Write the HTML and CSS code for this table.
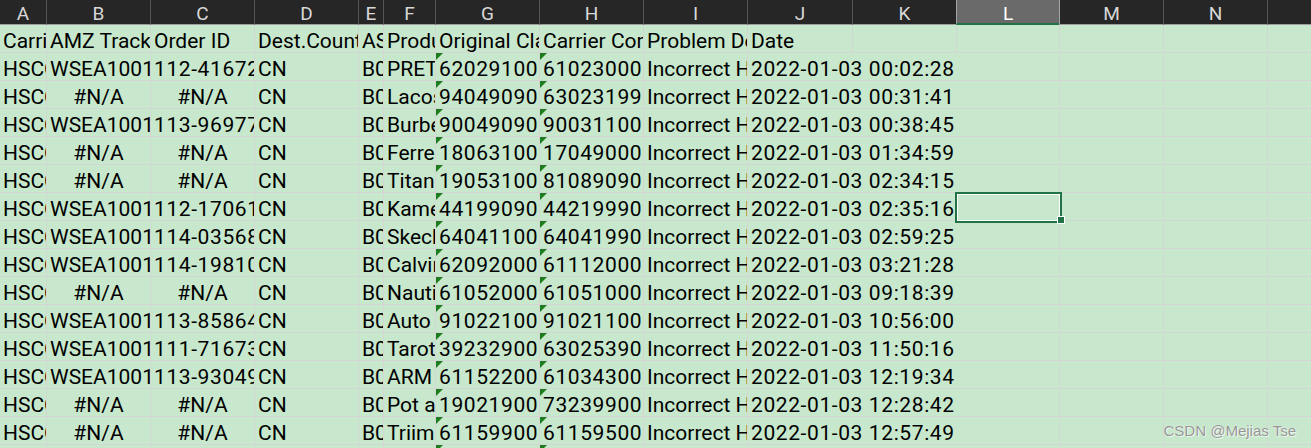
FILE: index.html
```html
<!DOCTYPE html>
<html lang="en">
<head>
<meta charset="utf-8">
<title>Sheet</title>
<link rel="stylesheet" href="styles.css">
</head>
<body>
<div class="sheet">
  <div class="h first">A</div><div class="h">B</div><div class="h">C</div><div class="h">D</div><div class="h">E</div><div class="h">F</div><div class="h">G</div><div class="h">H</div><div class="h">I</div><div class="h">J</div><div class="h">K</div><div class="h sel">L</div><div class="h after-sel">M</div><div class="h">N</div><div class="h"></div>

  <div class="c first">Carrier</div><div class="c">AMZ Tracking ID</div><div class="c">Order ID</div><div class="c">Dest.Country</div><div class="c">ASIN</div><div class="c">Product Name</div><div class="c">Original Class Code</div><div class="c">Carrier Corrected Code</div><div class="c">Problem Description</div><div class="c">Date</div><div class="c"></div><div class="c"></div><div class="c"></div><div class="c"></div><div class="c"></div>

  <div class="c first">HSCODE</div><div class="c">WSEA10012384756</div><div class="c n">112-4167234-1234567</div><div class="c">CN</div><div class="c">B07XYZ1234</div><div class="c">PRETTYGARDEN Dress</div><div class="c n tri">6202910000</div><div class="c n tri">6102300000</div><div class="c">Incorrect HS Code</div><div class="c n sp3">2022-01-03 00:02:28</div><div class="c"></div><div class="c"></div><div class="c"></div>

  <div class="c first">HSCODE</div><div class="c ctr">#N/A</div><div class="c ctr">#N/A</div><div class="c">CN</div><div class="c">B08XYZ1234</div><div class="c">Lacoste Towel</div><div class="c n tri">9404909000</div><div class="c n tri">6302319900</div><div class="c">Incorrect HS Code</div><div class="c n sp3">2022-01-03 00:31:41</div><div class="c"></div><div class="c"></div><div class="c"></div>

  <div class="c first">HSCODE</div><div class="c">WSEA10012384757</div><div class="c n">113-9697734-2345678</div><div class="c">CN</div><div class="c">B09XYZ1234</div><div class="c">Burberry Watch</div><div class="c n tri">9004909000</div><div class="c n tri">9003110000</div><div class="c">Incorrect HS Code</div><div class="c n sp3">2022-01-03 00:38:45</div><div class="c"></div><div class="c"></div><div class="c"></div>

  <div class="c first">HSCODE</div><div class="c ctr">#N/A</div><div class="c ctr">#N/A</div><div class="c">CN</div><div class="c">B01XYZ1234</div><div class="c">Ferrero Rocher</div><div class="c n tri">1806310000</div><div class="c n tri">1704900000</div><div class="c">Incorrect HS Code</div><div class="c n sp3">2022-01-03 01:34:59</div><div class="c"></div><div class="c"></div><div class="c"></div>

  <div class="c first">HSCODE</div><div class="c ctr">#N/A</div><div class="c ctr">#N/A</div><div class="c">CN</div><div class="c">B02XYZ1234</div><div class="c">Titan Cup</div><div class="c n tri">1905310000</div><div class="c n tri">8108909000</div><div class="c">Incorrect HS Code</div><div class="c n sp3">2022-01-03 02:34:15</div><div class="c"></div><div class="c"></div><div class="c"></div>

  <div class="c first">HSCODE</div><div class="c">WSEA10012384758</div><div class="c n">112-1706134-3456789</div><div class="c">CN</div><div class="c">B03XYZ1234</div><div class="c">Kamenstein Rack</div><div class="c n tri">4419909090</div><div class="c n tri">4421999090</div><div class="c">Incorrect HS Code</div><div class="c n sp2">2022-01-03 02:35:16</div><div class="c selc"><div class="selbox"></div><div class="handle"></div></div><div class="c"></div><div class="c"></div><div class="c"></div>

  <div class="c first">HSCODE</div><div class="c">WSEA10012384759</div><div class="c n">114-0356834-4567890</div><div class="c">CN</div><div class="c">B04XYZ1234</div><div class="c">Skechers Shoes</div><div class="c n tri">6404110000</div><div class="c n tri">6404199000</div><div class="c">Incorrect HS Code</div><div class="c n sp3">2022-01-03 02:59:25</div><div class="c"></div><div class="c"></div><div class="c"></div>

  <div class="c first">HSCODE</div><div class="c">WSEA10012384760</div><div class="c n">114-1981034-5678901</div><div class="c">CN</div><div class="c">B05XYZ1234</div><div class="c">Calvin Klein Pajamas</div><div class="c n tri">6209200000</div><div class="c n tri">6111200050</div><div class="c">Incorrect HS Code</div><div class="c n sp3">2022-01-03 03:21:28</div><div class="c"></div><div class="c"></div><div class="c"></div>

  <div class="c first">HSCODE</div><div class="c ctr">#N/A</div><div class="c ctr">#N/A</div><div class="c">CN</div><div class="c">B06XYZ1234</div><div class="c">Nautica Shirt</div><div class="c n tri">6105200090</div><div class="c n tri">6105100090</div><div class="c">Incorrect HS Code</div><div class="c n sp3">2022-01-03 09:18:39</div><div class="c"></div><div class="c"></div><div class="c"></div>

  <div class="c first">HSCODE</div><div class="c">WSEA10012384761</div><div class="c n">113-8586434-6789012</div><div class="c">CN</div><div class="c">B07XYZ5678</div><div class="c">Auto Watch</div><div class="c n tri">9102210090</div><div class="c n tri">9102110000</div><div class="c">Incorrect HS Code</div><div class="c n sp3">2022-01-03 10:56:00</div><div class="c"></div><div class="c"></div><div class="c"></div>

  <div class="c first">HSCODE</div><div class="c">WSEA10012384762</div><div class="c n">111-7167334-7890123</div><div class="c">CN</div><div class="c">B08XYZ5678</div><div class="c">Tarot Cloth</div><div class="c n tri">3923290000</div><div class="c n tri">6302539000</div><div class="c">Incorrect HS Code</div><div class="c n sp3">2022-01-03 11:50:16</div><div class="c"></div><div class="c"></div><div class="c"></div>

  <div class="c first">HSCODE</div><div class="c">WSEA10012384763</div><div class="c n">113-9304934-8901234</div><div class="c">CN</div><div class="c">B09XYZ5678</div><div class="c">ARM Socks</div><div class="c n tri">6115220000</div><div class="c n tri">6103430090</div><div class="c">Incorrect HS Code</div><div class="c n sp3">2022-01-03 12:19:34</div><div class="c"></div><div class="c"></div><div class="c"></div>

  <div class="c first">HSCODE</div><div class="c ctr">#N/A</div><div class="c ctr">#N/A</div><div class="c">CN</div><div class="c">B01XYZ5678</div><div class="c">Pot and Pan Set</div><div class="c n tri">1902190010</div><div class="c n tri">7323990000</div><div class="c">Incorrect HS Code</div><div class="c n sp3">2022-01-03 12:28:42</div><div class="c"></div><div class="c"></div><div class="c"></div>

  <div class="c first">HSCODE</div><div class="c ctr">#N/A</div><div class="c ctr">#N/A</div><div class="c">CN</div><div class="c">B02XYZ5678</div><div class="c">Triim Socks</div><div class="c n tri">6115990000</div><div class="c n tri">6115950010</div><div class="c">Incorrect HS Code</div><div class="c n sp3">2022-01-03 12:57:49</div><div class="c"></div><div class="c"></div><div class="c"></div>

  <div class="c first">HSCODE</div><div class="c">WSEA10012384764</div><div class="c n">112-1234534-9012345</div><div class="c">CN</div><div class="c">B03XYZ5678</div><div class="c">Hat</div><div class="c n tri">6505009000</div><div class="c n tri">6505001000</div><div class="c">Incorrect HS Code</div><div class="c n sp3">2022-01-03 13:02:11</div><div class="c"></div><div class="c"></div><div class="c"></div>
</div>
<div class="watermark">CSDN @Mejias Tse</div>
</body>
</html>
```

FILE: styles.css
```css
html, body {
  margin: 0;
  padding: 0;
  height: 448px;
  overflow: hidden;
  background: #c8e8cd;
}

body {
  position: relative;
  font-family: "Liberation Sans", Arial, sans-serif;
}

.sheet {
  display: grid;
  grid-template-columns: 46px 104px 104px 104px 25px 52px 104px 104px 104px 105px 104px 103px 104px 104px 1fr;
  grid-template-rows: 25px;
  grid-auto-rows: 28px;
}

.h {
  box-sizing: border-box;
  height: 25px;
  background: #262626;
  color: #d8d8d8;
  font-family: Roboto, "Liberation Sans", sans-serif;
  font-size: 19px;
  line-height: 24px;
  padding-top: 2px;
  text-align: center;
  border-left: 1px solid #555555;
  border-bottom: 1px solid #9d9d9d;
  overflow: hidden;
}

.h.first {
  border-left: 0;
}

.h.sel {
  background: #6a6a6a;
  color: #ffffff;
  border-left-color: #a3a3a3;
  border-bottom: 2px solid #217346;
}

.h.after-sel {
  border-left-color: #a3a3a3;
}

.c {
  box-sizing: border-box;
  min-width: 0;
  position: relative;
  border-left: 1px solid #d4d6d4;
  border-bottom: 1px solid #d4d6d4;
  padding: 5px 0 0 3px;
  font-family: Roboto, "Liberation Sans", sans-serif;
  font-size: 21px;
  line-height: 23px;
  color: #000000;
  white-space: nowrap;
  overflow: hidden;
}

.c.n {
  letter-spacing: 0.6px;
}

.c.first {
  border-left: 0;
}

.c.ctr {
  text-align: center;
  padding-left: 0;
}

.sp3 {
  grid-column: span 3;
}

.sp2 {
  grid-column: span 2;
}

.tri::before {
  content: "";
  position: absolute;
  left: 0;
  top: 0;
  border-top: 7px solid #1b7d1b;
  border-right: 7px solid transparent;
}

.c.selc {
  overflow: visible;
  z-index: 2;
}

.selbox {
  position: absolute;
  left: -2px;
  top: -1px;
  width: 107px;
  height: 31px;
  box-sizing: border-box;
  border: 2px solid #217346;
  box-shadow: inset 0 0 0 1px #ffffff;
}

.handle {
  position: absolute;
  left: 100px;
  top: 23px;
  width: 6px;
  height: 6px;
  background: #217346;
  border: 1px solid #ffffff;
}

.watermark {
  position: absolute;
  right: 15px;
  top: 422px;
  font-size: 15px;
  line-height: 17px;
  color: #959595;
  text-shadow: 0 0 1px #ffffff, 1px 1px 0 rgba(255, 255, 255, 0.6);
}
```
